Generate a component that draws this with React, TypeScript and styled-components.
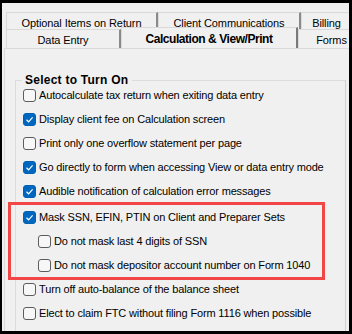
import styled, { createGlobalStyle } from "styled-components";

const GlobalStyle = createGlobalStyle`
  html, body {
    margin: 0;
    padding: 0;
    background: #000;
  }
  * {
    box-sizing: border-box;
  }
`;

type TabDef = { label: string; width: number; active?: boolean };

const topTabs: TabDef[] = [
  { label: "Optional Items on Return", width: 152 },
  { label: "Client Communications", width: 143 },
  { label: "Billing", width: 52 },
];

const bottomTabs: TabDef[] = [
  { label: "Data Entry", width: 115 },
  { label: "Calculation & View/Print", width: 177, active: true },
  { label: "Forms", width: 68 },
];

type Option = { label: string; checked: boolean; nested?: boolean };

const before: Option[] = [
  { label: "Autocalculate tax return when exiting data entry", checked: false },
  { label: "Display client fee on Calculation screen", checked: true },
  { label: "Print only one overflow statement per page", checked: false },
  { label: "Go directly to form when accessing View or data entry mode", checked: true },
  { label: "Audible notification of calculation error messages", checked: true },
];

const highlighted: Option[] = [
  { label: "Mask SSN, EFIN, PTIN on Client and Preparer Sets", checked: true },
  { label: "Do not mask last 4 digits of SSN", checked: false, nested: true },
  { label: "Do not mask depositor account number on Form 1040", checked: false, nested: true },
];

const after: Option[] = [
  { label: "Turn off auto-balance of the balance sheet", checked: false },
  { label: "Elect to claim FTC without filing Form 1116 when possible", checked: false },
];

const Frame = styled.div`
  width: 352px;
  height: 334px;
  border: 3px solid #000;
  border-left-width: 2px;
  background: #f0f0f0;
  overflow: hidden;
  font-family: "Liberation Sans", Arial, sans-serif;
  font-size: 11px;
  color: #000;
  padding: 9px 0 0 2px;
`;

const TabRow = styled.div<{ $front?: boolean }>`
  display: flex;
  height: ${(p) => (p.$front ? 19 : 17)}px;
  padding-left: 2px;
  position: relative;
  z-index: ${(p) => (p.$front ? 2 : 1)};
`;

const Tab = styled.div<{ $active?: boolean; $w: number }>`
  flex: 0 0 ${(p) => p.$w}px;
  display: flex;
  align-items: center;
  justify-content: center;
  background: #f0f0f0;
  border-top: 1px solid #d9d9d9;
  border-left: 1px solid #d9d9d9;
  border-right: 2px solid ${(p) => (p.$active ? "#7a7a7a" : "#8a8a8a")};
  white-space: nowrap;
  font-size: ${(p) => (p.$active ? 12 : 11)}px;
  letter-spacing: ${(p) => (p.$active ? -0.45 : -0.1)}px;
  font-weight: ${(p) => (p.$active ? 700 : 400)};
  height: ${(p) => (p.$active ? 21 : 19)}px;
  margin-top: ${(p) => (p.$active ? -2 : 0)}px;
  padding-top: 1px;
  ${(p) => (p.$active ? "margin-bottom: -2px;" : "")}
`;

const Panel = styled.div`
  border-top: 1px solid #d9d9d9;
  border-left: 1px solid #d9d9d9;
  height: 300px;
  padding: 24px 0 0 10px;
`;

const Group = styled.fieldset`
  margin: 0;
  border: 1px solid #dcdcdc;
  border-right-color: #d0d0d0;
  border-bottom: none;
  padding: 0 0 0 7px;
  height: 290px;
  width: 331px;
  display: flex;
  flex-direction: column;
`;

const Legend = styled.legend`
  font-weight: 700;
  font-size: 12px;
  padding: 0 4px 0 3px;
  margin-left: -1px;
  letter-spacing: 0.25px;
`;

const List = styled.div`
  display: flex;
  flex-direction: column;
  margin-top: -4px;
`;

const Highlight = styled.div`
  border: 3px solid #f24646;
  margin: -1px 20px -3px -15px;
  padding: 0 0 0 12px;
  display: flex;
  flex-direction: column;
`;

const Row = styled.label<{ $nested?: boolean }>`
  display: flex;
  align-items: center;
  gap: 3px;
  height: 24px;
  flex: 0 0 24px;
  padding-left: ${(p) => (p.$nested ? 15 : 0)}px;
  white-space: nowrap;
  letter-spacing: -0.15px;
`;

const Box = styled.span<{ $checked: boolean }>`
  flex: 0 0 13px;
  width: 13px;
  height: 13px;
  border-radius: 3px;
  border: 1px solid ${(p) => (p.$checked ? "#0063b1" : "#5c5c5c")};
  background: ${(p) => (p.$checked ? "#0067c0" : "#f7f7f7")};
  display: flex;
  align-items: center;
  justify-content: center;
`;

const Check = () => (
  <svg width="9" height="9" viewBox="0 0 9 9">
    <path d="M1.5 4.8 L3.6 6.8 L7.6 2.4" fill="none" stroke="#fff" strokeWidth="1.2" />
  </svg>
);

const OptionRow = ({ option }: { option: Option }) => (
  <Row $nested={option.nested}>
    <Box $checked={option.checked}>{option.checked && <Check />}</Box>
    <span>{option.label}</span>
  </Row>
);

export default function App() {
  return (
    <Frame>
      <GlobalStyle />
      <TabRow>
        {topTabs.map((t) => (
          <Tab key={t.label} $w={t.width}>
            {t.label}
          </Tab>
        ))}
      </TabRow>
      <TabRow $front>
        {bottomTabs.map((t) => (
          <Tab key={t.label} $w={t.width} $active={t.active}>
            {t.label}
          </Tab>
        ))}
      </TabRow>
      <Panel>
        <Group>
          <Legend>Select to Turn On</Legend>
          <List>
            {before.map((o) => (
              <OptionRow key={o.label} option={o} />
            ))}
            <Highlight>
              {highlighted.map((o) => (
                <OptionRow key={o.label} option={o} />
              ))}
            </Highlight>
            {after.map((o) => (
              <OptionRow key={o.label} option={o} />
            ))}
          </List>
        </Group>
      </Panel>
    </Frame>
  );
}
